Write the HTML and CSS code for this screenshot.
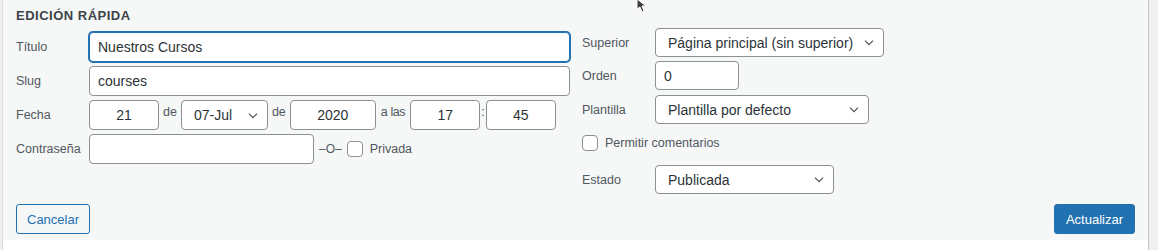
FILE: index.html
```html
<html>

<head>
	<meta charset="utf-8">
	<link rel="stylesheet" href="styles.css">
</head>

<body>
	<div class="wrap">
		<div class="quick-edit">
			<div class="cols">
				<div class="col-left">
					<div class="legend">Edición rápida</div>
					<div class="row">
						<span class="title">Título</span>
						<input class="text focused" type="text" value="Nuestros Cursos">
					</div>
					<div class="row">
						<span class="title">Slug</span>
						<input class="text" type="text" value="courses">
					</div>
					<div class="row">
						<span class="title">Fecha</span>
						<input class="text num day" type="text" value="21">
						<span class="sep">de</span>
						<select class="month"><option>07-Jul</option></select>
						<span class="sep">de</span>
						<input class="text num year" type="text" value="2020">
						<span class="sep at">a las</span>
						<input class="text num day" type="text" value="17">
						<span class="sep colon">:</span>
						<input class="text num day" type="text" value="45">
					</div>
					<div class="row">
						<span class="title">Contraseña</span>
						<input class="text pass" type="text" value="">
						<span class="sep or">–O–</span>
						<label class="check"><span class="box"></span>Privada</label>
					</div>
				</div>
				<div class="col-right">
					<div class="row">
						<span class="title">Superior</span>
						<select class="parent"><option>Página principal (sin superior)</option></select>
					</div>
					<div class="row order-row">
						<span class="title">Orden</span>
						<input class="text order" type="text" value="0">
					</div>
					<div class="row">
						<span class="title">Plantilla</span>
						<select class="template"><option>Plantilla por defecto</option></select>
					</div>
					<div class="row check-row">
						<label class="check"><span class="box"></span>Permitir comentarios</label>
					</div>
					<div class="row">
						<span class="title">Estado</span>
						<select class="status"><option>Publicada</option></select>
					</div>
				</div>
			</div>
			<div class="actions">
				<button class="button">Cancelar</button>
				<button class="button primary">Actualizar</button>
			</div>
		</div>
		<div class="spacer"></div>
	</div>
	<svg class="cursor" width="14" height="14" viewBox="0 0 14 14">
		<path d="M1 0 L1 10 L4 8 L6 13 L8 12 L6 7 L10 7 Z" fill="#3c3c3c" stroke="#fff" stroke-width="1" />
	</svg>
</body>

</html>
```

FILE: styles.css
```css
body {
	margin: 0;
	background: #f0f0f1;
	font-family: "Liberation Sans", Arial, sans-serif;
	color: #50575e;
}

.wrap {
	margin-left: 2px;
	width: 1145px;
	border-left: 1px solid #dcdcde;
	border-right: 1px solid #c3c4c7;
	background: #fff;
	height: 250px;
}

.quick-edit {
	background: #f6f7f7;
	height: 240px;
	padding: 0 13px 0 13px;
	box-sizing: border-box;
}

.cols {
	display: flex;
}

.col-left {
	width: 554px;
}

.col-right {
	margin-left: 12px;
	padding-top: 28px;
}

.legend {
	font-size: 13px;
	font-weight: bold;
	letter-spacing: 0.5px;
	text-transform: uppercase;
	color: #3c434a;
	height: 32px;
	line-height: 31px;
}

.row {
	display: flex;
	align-items: center;
	margin-bottom: 4px;
	font-size: 12.5px;
}

.col-right .order-row {
	margin-bottom: 5px;
}

.title {
	width: 73px;
	flex: none;
	color: #50575e;
}

input.text,
select {
	font-family: "Liberation Sans", Arial, sans-serif;
	font-size: 14px;
	color: #2c3338;
	height: 30px;
	border: 1px solid #8c8f94;
	border-radius: 4px;
	background: #fff;
	box-sizing: border-box;
	margin: 0;
	outline: none;
}

input.text {
	padding: 0 8px;
	flex: 1;
}

input.focused {
	border-color: #2271b1;
	box-shadow: 0 0 0 1px #2271b1;
}

input.num {
	flex: none;
	text-align: center;
	padding: 0 2px;
}

input.day {
	width: 70px;
}

input.year {
	width: 86px;
}

select {
	appearance: none;
	-webkit-appearance: none;
	padding: 0 28px 0 12px;
	background: #fff url('data:image/svg+xml;utf8,<svg xmlns="http://www.w3.org/2000/svg" width="20" height="20" viewBox="0 0 20 20"><path d="M5 7 L10 12 L15 7" fill="none" stroke="%2350575e" stroke-width="1.6"/></svg>') no-repeat right 6px top 55%;
	background-size: 16px 16px;
	flex: none;
}

select.month {
	width: 87px;
}

.sep {
	margin: 0 4px;
	position: relative;
	top: -3px;
}

.sep.at {
	margin: 0 5px;
	letter-spacing: -0.4px;
}

.sep.colon {
	margin: 0 1px;
}

.sep.or {
	margin: 0 5px;
	top: 0;
	font-size: 12px;
}

input.pass {
	flex: none;
	width: 225px;
}

.check {
	display: flex;
	align-items: center;
	color: #50575e;
}

.box {
	width: 16px;
	height: 16px;
	box-sizing: border-box;
	border: 1px solid #8c8f94;
	border-radius: 4px;
	background: #fff;
	margin-right: 7px;
}

.row.check-row {
	height: 28px;
	margin-top: 5px;
	margin-bottom: 8px;
}

select.parent {
	width: 229px;
	height: 29px;
}

input.order {
	flex: none;
	width: 84px;
	height: 29px;
}

select.template {
	width: 214px;
	height: 29px;
}

select.status {
	width: 179px;
	height: 29px;
}

.actions {
	display: flex;
	justify-content: space-between;
	margin-top: 6px;
}

.button {
	font-family: "Liberation Sans", Arial, sans-serif;
	font-size: 13px;
	height: 30px;
	padding: 0 10px;
	border: 1px solid #2271b1;
	border-radius: 3px;
	background: #f6f7f7;
	color: #2271b1;
}

.button.primary {
	background: #2271b1;
	color: #fff;
	padding: 0 11px;
}

.cursor {
	position: absolute;
	left: 636px;
	top: -1px;
}
```
